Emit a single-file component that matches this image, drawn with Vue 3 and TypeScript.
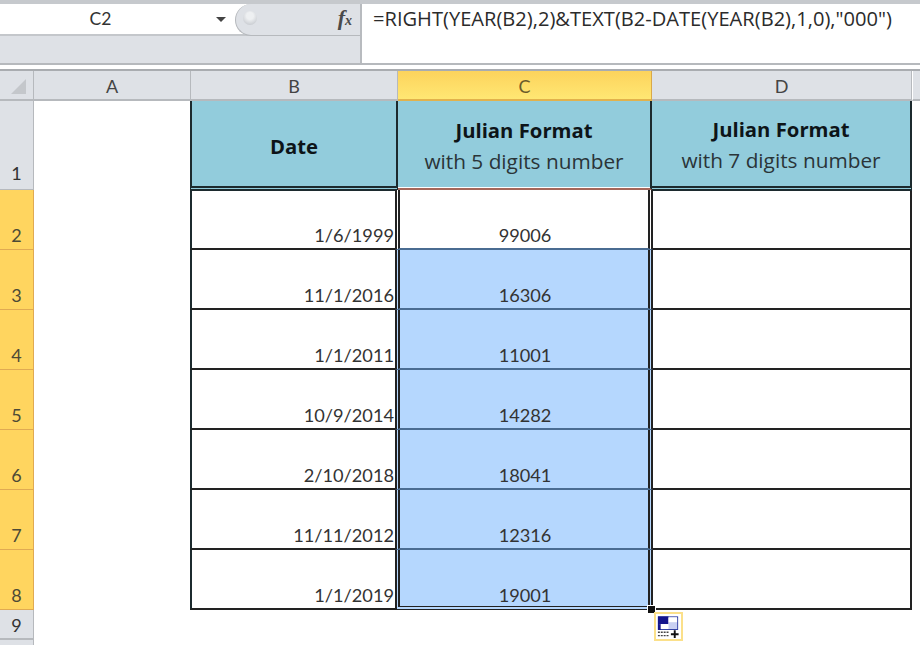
<script setup lang="ts">
interface Row { n: number; date: string; jul: string }
const rows: Row[] = [
  { n: 2, date: '1/6/1999', jul: '99006' },
  { n: 3, date: '11/1/2016', jul: '16306' },
  { n: 4, date: '1/1/2011', jul: '11001' },
  { n: 5, date: '10/9/2014', jul: '14282' },
  { n: 6, date: '2/10/2018', jul: '18041' },
  { n: 7, date: '11/11/2012', jul: '12316' },
  { n: 8, date: '1/1/2019', jul: '19001' },
]
</script>

<template>
  <div class="app">
    <div class="formula">
      <div class="left">
        <div class="top">
          <div class="name">C2</div>
          <div class="drop"><span class="tri"></span></div>
          <div class="fxwrap">
            <span class="knob"></span>
            <span class="fx">f<small>x</small></span>
          </div>
        </div>
      </div>
      <div class="input">=RIGHT(YEAR(B2),2)&amp;TEXT(B2-DATE(YEAR(B2),1,0),"000")</div>
    </div>
    <div class="sep"></div>
    <div class="sheet">
      <div class="corner"><span class="cornertri"></span></div>
      <div class="ch">A</div>
      <div class="ch">B</div>
      <div class="ch active">C</div>
      <div class="ch">D</div>
      <div class="ch end"></div>

      <div class="rh first">1</div>
      <div class="c"></div>
      <div class="c head b1 single">
        <b>Date</b>
      </div>
      <div class="c head activehead">
        <b>Julian Format</b><span>with 5 digits number</span>
      </div>
      <div class="c head">
        <b>Julian Format</b><span>with 7 digits number</span>
      </div>
      <div class="c"></div>

      <template v-for="(r, i) in rows" :key="r.n">
        <div class="rh sel">{{ r.n }}</div>
        <div class="c"></div>
        <div class="c data date b1">{{ r.date }}</div>
        <div class="c data jul" :class="{ fill: i > 0, last: i === rows.length - 1 }">{{ r.jul }}</div>
        <div class="c data d"></div>
        <div class="c"></div>
      </template>

      <div class="rh nine">9</div>
      <div class="c blank"></div>
      <div class="c blank"></div>
      <div class="c blank"></div>
      <div class="c blank"></div>
      <div class="c blank"></div>
      <div class="rh ten"></div>

      <span class="handle"></span>
      <div class="paste">
        <svg width="26" height="26" viewBox="0 0 26 26">
          <rect x="2.500" y="2.500" width="20" height="13" fill="#fff" stroke="#1a2a9a" />
          <rect x="2" y="2" width="11" height="8" fill="#14148c" />
          <rect x="2" y="10" width="3" height="6" fill="#14148c" />
          <rect x="13" y="3" width="9" height="5" fill="#fff" />
          <rect x="5" y="10" width="8" height="5" fill="#fff" />
          <rect x="13" y="8" width="9" height="7" fill="#c9d0f2" />
          <path d="M2 18.500h2M5 18.500h2M8 18.500h2M11 18.500h2M2 22h2M5 22h2M8 22h2M11 22h2" stroke="#444" stroke-width="1.400" />
          <path d="M19.500 16.500v8M15.500 20.500h8" stroke="#111" stroke-width="2" />
        </svg>
      </div>
    </div>
  </div>
</template>

<style>
html, body { margin: 0; background: #fff; overflow: hidden; }
</style>

<style scoped>
.app {
  width: 920px;
  height: 645px;
  overflow: hidden;
  font-family: Lato, "Open Sans", sans-serif;
  color: #222;
  background: #fff;
}
.formula {
  height: 65px;
  display: flex;
  background: #dee1e6;
  border-top: 4px solid #c6c9cd;
  box-sizing: border-box;
  border-bottom: 2px solid #b6b9bd;
}
.left {
  width: 362px;
  flex: none;
  box-sizing: border-box;
  border-right: 2px solid #b8bbbf;
}
.top {
  height: 30px;
  display: flex;
  background: #fff;
  border-bottom: 2px solid #c4c7cb;
}
.name {
  width: 201px;
  text-align: center;
  font-size: 17.500px;
  line-height: 30px;
  color: #333;
}
.drop {
  width: 34px;
  display: flex;
  align-items: center;
  justify-content: center;
}
.tri {
  border-left: 5px solid transparent;
  border-right: 5px solid transparent;
  border-top: 5px solid #444;
  margin-left: 5px;
}
.fxwrap {
  flex: 1;
  position: relative;
  background: #dee1e6;
  border: 1px solid #b6b9bd;
  border-right: 0;
  border-top: 0;
  border-radius: 17px 0 0 17px;
  margin-bottom: -2px;
}
.knob {
  position: absolute;
  left: 7px;
  top: 7px;
  width: 14px;
  height: 14px;
  border-radius: 50%;
  background: radial-gradient(circle at 50% 35%, #eef0f2 30%, #c9ccd1 80%);
}
.fx {
  position: absolute;
  right: 8px;
  top: 0;
  font-family: "Liberation Serif", serif;
  font-style: italic;
  font-weight: 700;
  font-size: 22px;
  line-height: 28px;
  color: #4a4a4a;
}
.fx small { font-size: 14px; }
.input {
  flex: 1;
  background: #fff;
  font-family: "Open Sans", sans-serif;
  font-size: 20.100px;
  line-height: 29px;
  padding-left: 11px;
  color: #2b2b2b;
  white-space: nowrap;
  overflow: hidden;
}
.sep {
  height: 6px;
  background: #fff;
  border-bottom: 2px solid #a9acb0;
  box-sizing: border-box;
}
.sheet {
  position: relative;
  display: grid;
  grid-template-columns: 34px 157px 207px 254px 260px 8px;
  grid-template-rows: 30px 89px repeat(7, 60px) 30px 20px;
}
.corner {
  background: #dee1e6;
  border-right: 1px solid #b6b9bd;
  border-bottom: 2px solid #b6b9bd;
  box-sizing: border-box;
  position: relative;
}
.cornertri {
  position: absolute;
  right: 7px;
  bottom: 5px;
  width: 0;
  height: 0;
  border-left: 15px solid transparent;
  border-bottom: 15px solid #c4c7cb;
}
.ch {
  background: #dee1e6;
  border-right: 1px solid #b6b9bd;
  border-bottom: 2px solid #b6b9bd;
  box-sizing: border-box;
  text-align: center;
  font-size: 18px;
  line-height: 30px;
  color: #444;
}
.ch.active {
  background: linear-gradient(#fdd35c, #ffe773);
  border-right-color: #d9a94a;
  border-bottom-color: #e2b24c;
  color: #6b5a2a;
}
.ch.end { border-right: 0; border-left: 1px solid #fff; }
.rh {
  background: #dee1e6;
  border-right: 1px solid #b6b9bd;
  border-bottom: 1px solid #b6b9bd;
  box-sizing: border-box;
  font-size: 18px;
  text-align: center;
  display: flex;
  align-items: flex-end;
  justify-content: center;
  line-height: 24px;
  color: #333;
  padding-bottom: 2px;
}
.rh.first { padding-bottom: 4px; }
.rh.sel {
  background: #ffd55f;
  border-right: 1px solid #e0aa52;
  border-bottom: 1px solid #e0aa52;
  color: #4d4a36;
}
.rh.nine { padding-bottom: 1px; border-bottom: 2px solid #b6b9bd; }
.rh.ten { border-bottom: 0; padding: 0; }
.c { background: #fff; box-sizing: border-box; font-size: 17px; }
.head {
  position: relative;
  z-index: 1;
  background: #92ccdc;
  border-right: 2px solid #1c2a2e;
  border-bottom: 5px double #1c2a2e;
  margin-bottom: -1px;
  padding-top: 2px;
  display: flex;
  flex-direction: column;
  align-items: center;
  justify-content: center;
  font-family: "Open Sans", sans-serif;
  font-size: 20.800px;
  color: #2a3438;
}
.head.single { padding-top: 4px; }
.head b { color: #0d1418; font-size: 20.300px; font-weight: 700; line-height: 30px; }
.head span { line-height: 32px; }
.activehead {
  border-bottom: 2px solid #a5675a;
  box-shadow: inset 0 -1px 0 #fff;
  margin-bottom: 0;
}
.head.b1, .data.b1 { border-left: 2px solid #1c2a2e; margin-left: -1px; }
.data {
  border-right: 2px solid #222;
  border-bottom: 2px solid #222;
  display: flex;
  align-items: flex-end;
  line-height: 24px;
  padding-bottom: 1px;
  font-size: 18.200px;
  color: #333;
}
.date { justify-content: flex-end; padding-right: 2px; }
.jul {
  position: relative;
  z-index: 1;
  justify-content: center;
  border-right: 5px double #222;
  border-left: 5px double #222;
  border-bottom-color: #4a6c92;
  margin-left: -3px;
  margin-right: -1px;
  padding-left: 2px;
}
.jul.fill { background: #b5d7fe; }
.jul.last { border-bottom: 4px double #222; padding-bottom: 0; line-height: 22px; }
.handle {
  position: absolute;
  left: 647px;
  top: 534px;
  width: 7px;
  height: 7px;
  background: #111;
  border: 1px solid #fff;
  box-sizing: content-box;
  z-index: 2;
}
.blank { background: #fff; }
.paste {
  position: absolute;
  left: 654px;
  top: 541px;
  width: 29px;
  height: 29px;
  box-sizing: border-box;
  border: 2px solid #fbe08a;
  background: #fff;
  display: flex;
  align-items: center;
  justify-content: center;
  z-index: 3;
}
</style>
